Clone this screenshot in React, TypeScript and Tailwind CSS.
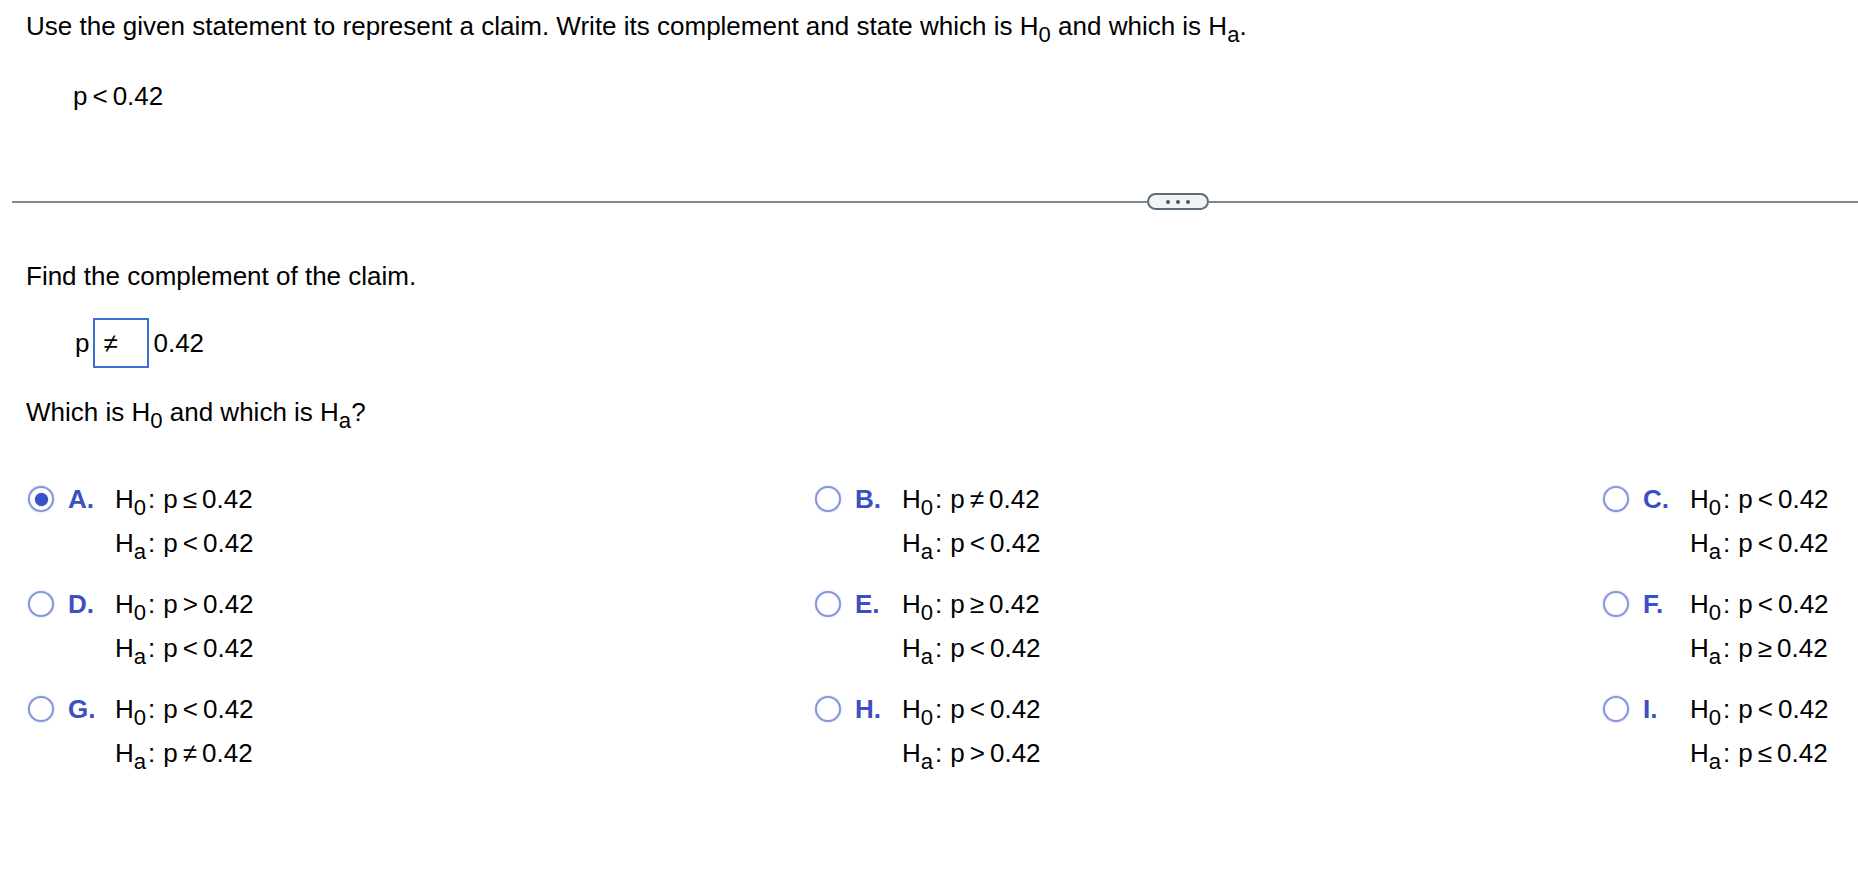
import React from 'react';

// subscript like H₀ / Hₐ, drawn lower than the baseline
function Sub({ children }: { children: React.ReactNode }) {
  return <span className="relative top-[0.3em] text-[0.85em] leading-none">{children}</span>;
}

function Rel({ children }: { children: React.ReactNode }) {
  return <span className="mx-[5px]">{children}</span>;
}

function Hyp({ sub, rel, value }: { sub: string; rel: string; value: string }) {
  return (
    <div className="whitespace-nowrap leading-[44px]">
      H<Sub>{sub}</Sub>
      <span className="ml-[2px]">:</span>
      <span className="ml-[8px]">p</span>
      <Rel>{rel}</Rel>
      {value}
    </div>
  );
}

interface Option {
  letter: string;
  h0: string;
  ha: string;
  selected?: boolean;
}

const OPTIONS: Option[] = [
  { letter: 'A.', h0: '≤', ha: '<', selected: true },
  { letter: 'B.', h0: '≠', ha: '<' },
  { letter: 'C.', h0: '<', ha: '<' },
  { letter: 'D.', h0: '>', ha: '<' },
  { letter: 'E.', h0: '≥', ha: '<' },
  { letter: 'F.', h0: '<', ha: '≥' },
  { letter: 'G.', h0: '<', ha: '≠' },
  { letter: 'H.', h0: '<', ha: '>' },
  { letter: 'I.', h0: '<', ha: '≤' },
];

function Radio({ selected }: { selected?: boolean }) {
  return (
    <div className="w-[26px] h-[26px] rounded-full border-[2.5px] border-[#8598dc] shadow-[0_0_2px_#b3bfeb] flex items-center justify-center bg-white">
      {selected && <div className="w-[13px] h-[13px] rounded-full bg-[#3552c8] shadow-[0_0_1px_#3552c8]" />}
    </div>
  );
}

export default function App() {
  return (
    <div className="w-[1858px] h-[874px] bg-white text-black text-[26px] font-['Liberation_Sans',Arial,sans-serif] overflow-hidden">
      {/* Question */}
      <div className="pl-[26px] pt-[11px]">
        <p className="leading-[30px] whitespace-nowrap">
          Use the given statement to represent a claim. Write its complement and state which is H<Sub>0</Sub> and which is H
          <Sub>a</Sub>.
        </p>
        <div className="pl-[47px] mt-[40px] leading-[30px]">
          p<Rel>&lt;</Rel>0.42
        </div>
      </div>

      {/* Divider with ellipsis */}
      <div className="mt-[82px] pl-[12px] flex items-center h-[17px]">
        <div className="w-[1135px] h-[2px] bg-[#808895]" />
        <div className="w-[62px] h-[17px] rounded-full border-2 border-[#5d6a7a] bg-[#f2f3f5] flex items-center justify-center gap-[6px]">
          <span className="w-[4px] h-[4px] rounded-full bg-[#4b5563]" />
          <span className="w-[4px] h-[4px] rounded-full bg-[#4b5563]" />
          <span className="w-[4px] h-[4px] rounded-full bg-[#4b5563]" />
        </div>
        <div className="flex-1 h-[2px] bg-[#808895]" />
      </div>

      <div className="pl-[26px]">
        <p className="mt-[51px] leading-[30px]">Find the complement of the claim.</p>

        <div className="mt-[27px] pl-[49px] flex items-center h-[50px]">
          <span>p</span>
          <div className="ml-[4px] w-[56px] h-[50px] border-2 border-[#3a6fd1] flex items-center pl-[8px]">≠</div>
          <span className="ml-[4px]">0.42</span>
        </div>

        <p className="mt-[29px] leading-[30px]">
          Which is H<Sub>0</Sub> and which is H<Sub>a</Sub>?
        </p>
      </div>

      {/* Answer choices */}
      <div className="mt-[50px] pl-[28px] grid grid-cols-[787px_788px_auto] gap-y-[17px]">
        {OPTIONS.map((o) => (
          <div key={o.letter} className="flex items-start">
            <div className="h-[44px] flex items-center">
              <Radio selected={o.selected} />
            </div>
            <div className="ml-[14px] w-[47px] leading-[44px] font-bold text-[#3d4fc2]">{o.letter}</div>
            <div>
              <Hyp sub="0" rel={o.h0} value="0.42" />
              <Hyp sub="a" rel={o.ha} value="0.42" />
            </div>
          </div>
        ))}
      </div>
    </div>
  );
}
